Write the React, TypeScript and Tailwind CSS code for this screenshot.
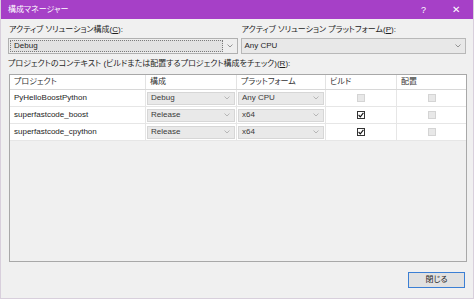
import React from 'react'

interface Row {
  name: string
  config: string
  platform: string
  build: boolean
}

const rows: Row[] = [
  { name: 'PyHelloBoostPython', config: 'Debug', platform: 'Any CPU', build: false },
  { name: 'superfastcode_boost', config: 'Release', platform: 'x64', build: true },
  { name: 'superfastcode_cpython', config: 'Release', platform: 'x64', build: true },
]

function Chevron({ color = '#8a8a8a' }: { color?: string }) {
  return (
    <svg width="6" height="4" viewBox="0 0 6 4" className="shrink-0">
      <polyline points="0.5,0.5 3,3 5.5,0.5" fill="none" stroke={color} strokeWidth="0.9" />
    </svg>
  )
}

function CellCombo({ value }: { value: string }) {
  return (
    <div className="mx-[1px] h-[13px] flex items-center justify-between border border-[#d6d6d6] bg-[#e9e9e9] pl-[3px] pr-[4px] text-[#3a3a3a]">
      <span>{value}</span>
      <Chevron color="#b0b0b0" />
    </div>
  )
}

function Check({ checked }: { checked: boolean }) {
  if (!checked) {
    return <div className="w-[8px] h-[8px] border border-[#d4d4d4] bg-[#e8e8e8]" />
  }
  return (
    <div className="w-[8px] h-[8px] border border-[#333333] bg-white flex items-center justify-center">
      <svg width="6" height="6" viewBox="0 0 6 6">
        <polyline points="0.6,3 2.3,4.8 5.4,0.8" fill="none" stroke="#111" strokeWidth="1.1" />
      </svg>
    </div>
  )
}

export default function App() {
  return (
    <div className="w-[474px] h-[299px] bg-[#f0f0f0] flex flex-col text-[8px] leading-[10px] text-[#1e1e1e] font-[family-name:'Liberation_Sans','Noto_Sans_CJK_JP',sans-serif] [font-feature-settings:'palt'] border-x border-b border-[#d8cfdc]">
      {/* title bar */}
      <div className="h-[19px] shrink-0 bg-[#a640c7] flex items-center justify-between pl-[7px] pr-[13px] text-white">
        <span>構成マネージャー</span>
        <div className="flex items-center gap-[26px] text-[9px]">
          <span>?</span>
          <span className="text-[10px]">✕</span>
        </div>
      </div>

      <div className="flex-1 flex flex-col px-[7px]">
        <div className="flex gap-[3px] mt-[6px]">
          <div className="w-[230px] flex flex-col">
            <span className="pl-[1px] h-[10px]">
              アクティブ ソリューション構成(<span className="underline">C</span>):
            </span>
            <div className="mt-[3px] h-[16px] flex border border-[#b0b0b0] bg-[#eeeeee]">
              <div className="flex-1 m-[1px] border border-dotted border-[#7a7a7a] bg-[#e2e2e2] flex items-center pl-[3px]">
                Debug
              </div>
              <div className="w-[13px] flex items-center justify-center">
                <Chevron />
              </div>
            </div>
          </div>
          <div className="w-[226px] flex flex-col">
            <span className="pl-[1px] h-[10px]">
              アクティブ ソリューション プラットフォーム(<span className="underline">P</span>):
            </span>
            <div className="mt-[3px] h-[16px] flex items-center justify-between border border-[#b8b8b8] bg-[#e8e8e8] pl-[3px] pr-[4px]">
              <span>Any CPU</span>
              <Chevron />
            </div>
          </div>
        </div>

        <span className="mt-[5px] h-[10px]">
          プロジェクトのコンテキスト (ビルドまたは配置するプロジェクト構成をチェック)(<span className="underline">R</span>):
        </span>

        {/* grid */}
        <div className="mt-[5px] ml-[1px] w-[458px] h-[188px] border border-[#a8a8a8] bg-[#f0f0f0] flex flex-col">
          <div className="h-[15px] shrink-0 flex bg-white border-b border-[#d8d8d8] text-[#333]">
            <div className="w-[136px] border-r border-[#e3e3e3] pl-[4px] flex items-center">プロジェクト</div>
            <div className="w-[91px] border-r border-[#e3e3e3] pl-[4px] flex items-center">構成</div>
            <div className="w-[89px] border-r border-[#e3e3e3] pl-[4px] flex items-center">プラットフォーム</div>
            <div className="w-[71px] border-r border-[#e3e3e3] pl-[4px] flex items-center">ビルド</div>
            <div className="flex-1 pl-[4px] flex items-center">配置</div>
          </div>
          {rows.map((r) => (
            <div key={r.name} className="h-[17px] shrink-0 flex bg-white border-b border-[#e6e6e6]">
              <div className="w-[136px] border-r border-[#e6e6e6] pl-[4px] flex items-center">{r.name}</div>
              <div className="w-[91px] border-r border-[#e6e6e6] flex flex-col justify-center">
                <CellCombo value={r.config} />
              </div>
              <div className="w-[89px] border-r border-[#e6e6e6] flex flex-col justify-center">
                <CellCombo value={r.platform} />
              </div>
              <div className="w-[71px] border-r border-[#e6e6e6] flex items-center justify-center">
                <Check checked={r.build} />
              </div>
              <div className="flex-1 flex items-center justify-center">
                <Check checked={false} />
              </div>
            </div>
          ))}
        </div>

        <div className="flex justify-end mt-[10px] pr-[1px]">
          <button className="w-[57px] h-[16px] border border-[#3b7fd4] bg-[#e1e1e1] flex items-center justify-center text-[#222]">
            閉じる
          </button>
        </div>
      </div>
    </div>
  )
}
